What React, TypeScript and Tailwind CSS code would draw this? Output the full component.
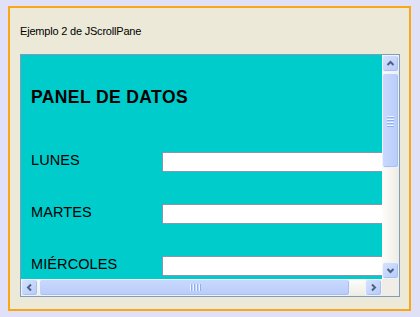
import React from "react";

type Dir = "up" | "down" | "left" | "right";

function Arrow({ dir }: { dir: Dir }) {
  const pts = {
    up: "1.5,6 4.5,3 7.5,6",
    down: "1.5,3 4.5,6 7.5,3",
    left: "6,1.5 3,4.5 6,7.5",
    right: "3,1.5 6,4.5 3,7.5",
  }[dir];
  return (
    <svg width="9" height="9" viewBox="0 0 9 9">
      <polyline points={pts} fill="none" stroke="#4d6185" strokeWidth="2" />
    </svg>
  );
}

function ScrollButton({ dir }: { dir: Dir }) {
  return (
    <div className="flex h-[17px] w-[17px] shrink-0 items-center justify-center rounded-[3px] border border-[#eef3fe] bg-linear-to-br from-[#d6e2fd] to-[#b7cbf8] shadow-[inset_-1px_-1px_0_#a9bfee]">
      <Arrow dir={dir} />
    </div>
  );
}

function Row({ label }: { label: string }) {
  return (
    <div className="flex h-[20px] items-center">
      <span className="mb-[3px] w-[131px] shrink-0 text-[14.5px] tracking-[0.1px] text-black">{label}</span>
      <div className="h-[20px] w-[260px] shrink-0 border border-[#8797b0] bg-white" />
    </div>
  );
}

export default function App() {
  return (
    <div
      className="h-[317px] w-[420px] bg-[#e0e0f7] pb-[6px] pl-[8px] pr-[9px] pt-[6px]"
      style={{ fontFamily: '"Liberation Sans", Arial, sans-serif' }}
    >
      <div className="flex h-full flex-col border-2 border-[#fba614] bg-[#ece9d8] pl-[10px] pr-[9px]">
        <div className="flex h-[46px] items-center text-[11px] tracking-[-0.2px] text-black">
          Ejemplo 2 de JScrollPane
        </div>
        <div className="flex h-[243px] flex-col border border-[#7f9db9]">
          <div className="flex h-[224px]">
            <div className="flex-1 overflow-hidden bg-[#00cccc] pl-[10px]">
              <div className="mt-[32px] flex h-[20px] items-center text-[17.5px] font-bold tracking-[0.4px] text-black">
                PANEL DE DATOS
              </div>
              <div className="mt-[45px] flex flex-col gap-[32px]">
                <Row label="LUNES" />
                <Row label="MARTES" />
                <Row label="MIÉRCOLES" />
              </div>
            </div>
            <div className="flex w-[17px] flex-col bg-linear-to-r from-[#fdfdfb] to-[#eeece3]">
              <ScrollButton dir="up" />
              <div className="flex-1 pt-[1px]">
                <div className="flex h-[95px] flex-col items-center justify-center gap-[1px] rounded-[3px] border border-[#eef3fe] bg-linear-to-r from-[#c9d8fd] to-[#b9ccf9] shadow-[inset_-1px_-1px_0_#a9bfee]">
                  <div className="h-[1px] w-[7px] bg-[#eef3fe] shadow-[0_1px_0_#8cb0f8]" />
                  <div className="mt-[1px] h-[1px] w-[7px] bg-[#eef3fe] shadow-[0_1px_0_#8cb0f8]" />
                  <div className="mt-[1px] h-[1px] w-[7px] bg-[#eef3fe] shadow-[0_1px_0_#8cb0f8]" />
                  <div className="mt-[1px] h-[1px] w-[7px] bg-[#eef3fe] shadow-[0_1px_0_#8cb0f8]" />
                </div>
              </div>
              <ScrollButton dir="down" />
            </div>
          </div>
          <div className="flex h-[17px]">
            <div className="flex flex-1 bg-linear-to-b from-[#fdfdfb] to-[#eeece3]">
              <ScrollButton dir="left" />
              <div className="flex-1 pl-[1px] pr-[15px]">
                <div className="flex h-full items-center justify-center gap-[1px] rounded-[3px] border border-[#eef3fe] bg-linear-to-b from-[#c9d8fd] to-[#b9ccf9] shadow-[inset_-1px_-1px_0_#a9bfee]">
                  <div className="h-[7px] w-[1px] bg-[#eef3fe] shadow-[1px_0_0_#8cb0f8]" />
                  <div className="ml-[1px] h-[7px] w-[1px] bg-[#eef3fe] shadow-[1px_0_0_#8cb0f8]" />
                  <div className="ml-[1px] h-[7px] w-[1px] bg-[#eef3fe] shadow-[1px_0_0_#8cb0f8]" />
                  <div className="ml-[1px] h-[7px] w-[1px] bg-[#eef3fe] shadow-[1px_0_0_#8cb0f8]" />
                </div>
              </div>
              <ScrollButton dir="right" />
            </div>
            <div className="w-[17px] bg-[#efede6]" />
          </div>
        </div>
      </div>
    </div>
  );
}
